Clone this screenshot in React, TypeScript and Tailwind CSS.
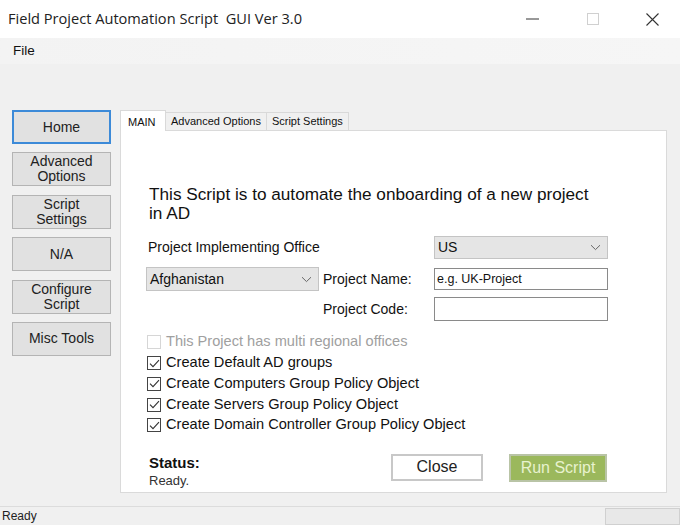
import React from 'react';

const sideButtons = [
  { label: 'Home', active: true },
  { label: 'Advanced\nOptions' },
  { label: 'Script\nSettings' },
  { label: 'N/A' },
  { label: 'Configure\nScript' },
  { label: 'Misc Tools' },
];

const checks = [
  { label: 'This Project has multi regional offices', checked: false, disabled: true },
  { label: 'Create Default AD groups', checked: true },
  { label: 'Create Computers Group Policy Object', checked: true },
  { label: 'Create Servers Group Policy Object', checked: true },
  { label: 'Create Domain Controller Group Policy Object', checked: true },
];

const Chevron = () => (
  <svg width="11" height="7" viewBox="0 0 11 7" className="shrink-0">
    <path d="M1 1.2 L5.5 5.6 L10 1.2" fill="none" stroke="#666" strokeWidth="1" />
  </svg>
);

const Select: React.FC<{ value: string; className?: string }> = ({ value, className }) => (
  <div
    className={`flex items-center justify-between border border-[#c4c4c4] bg-[#e5e5e5] pl-[3px] pr-[6px] text-[14px] text-[#111] ${className ?? ''}`}
  >
    <span>{value}</span>
    <Chevron />
  </div>
);

const CheckRow: React.FC<{ label: string; checked?: boolean; disabled?: boolean }> = ({ label, checked, disabled }) => (
  <div className="flex h-[20.75px] items-center">
    <div
      className={`flex h-[14px] w-[14px] items-center justify-center border bg-white ${disabled ? 'border-[#d6d6d6]' : 'border-[#444]'}`}
    >
      {checked && (
        <svg width="11" height="9" viewBox="0 0 11 9">
          <path d="M1 4.6 L4 7.6 L10 1.2" fill="none" stroke="#333" strokeWidth="1.1" />
        </svg>
      )}
    </div>
    <span className={`ml-[5px] text-[14.6px] ${disabled ? 'text-[#a0a0a0]' : 'text-[#111]'}`}>{label}</span>
  </div>
);

export default function App() {
  return (
    <div
      className="flex h-[525px] w-[680px] flex-col overflow-hidden bg-[#f0f0f0] text-[#111]"
      style={{ fontFamily: '"Liberation Sans", Arial, sans-serif' }}
    >
      {/* Title bar */}
      <div className="flex h-[38px] shrink-0 items-center bg-white">
        <span className="ml-[8px] text-[14.6px] text-[#222]" style={{ fontFamily: '"Open Sans", "Noto Sans", sans-serif' }}>
          Field Project Automation Script&nbsp; GUI Ver 3.0
        </span>
        <div className="ml-auto flex h-full items-center">
          <div className="flex h-full w-[60px] items-center justify-center">
            <svg width="13" height="2" viewBox="0 0 13 2">
              <path d="M0 1 H13" stroke="#333" strokeWidth="1" />
            </svg>
          </div>
          <div className="flex h-full w-[62px] items-center justify-center">
            <svg width="12" height="12" viewBox="0 0 12 12">
              <rect x="0.5" y="0.5" width="11" height="11" fill="none" stroke="#d0d0d0" strokeWidth="1" />
            </svg>
          </div>
          <div className="flex h-full w-[56px] items-center justify-center">
            <svg width="13" height="13" viewBox="0 0 13 13">
              <path d="M0.5 0.5 L12.5 12.5 M12.5 0.5 L0.5 12.5" stroke="#333" strokeWidth="1.1" />
            </svg>
          </div>
        </div>
      </div>

      {/* Menu bar */}
      <div className="flex h-[26px] shrink-0 items-center bg-gradient-to-r from-[#f3f3f3] to-[#f6f6f6] pl-[13px] text-[13.5px]">
        File
      </div>

      {/* Body */}
      <div className="flex flex-1">
        {/* Side buttons */}
        <div className="ml-[12px] mt-[46px] flex w-[99px] flex-col gap-[8.4px]">
          {sideButtons.map(b => (
            <div
              key={b.label}
              className={`flex h-[34px] items-center justify-center whitespace-pre-line text-center text-[14px] leading-[15px] text-[#222] ${
                b.active ? 'border-2 border-[#3c8ad8] bg-[#e1e1e1]' : 'border border-[#b4b4b4] bg-[#e1e1e1]'
              }`}
            >
              {b.label}
            </div>
          ))}
        </div>

        {/* Tabs + panel */}
        <div className="ml-[9px] mt-[46px] flex w-[547px] flex-col">
          <div className="flex h-[20px] items-end text-[11px]">
            <div className="relative z-10 -mb-px flex h-[21px] w-[46px] items-start border border-b-0 border-[#d9d9d9] bg-white pl-[7px] pt-[3px]">
              MAIN
            </div>
            <div className="flex h-[18px] items-center border border-b-0 border-l-0 border-[#d9d9d9] bg-[#f0f0f0] px-[5px]">
              Advanced Options
            </div>
            <div className="flex h-[18px] items-center border border-b-0 border-l-0 border-[#d9d9d9] bg-[#f0f0f0] px-[5px]">
              Script Settings
            </div>
          </div>

          <div className="flex h-[363px] flex-col border border-[#dadada] bg-white pl-[25px] pt-[54px]">
            <div className="ml-[3px] text-[17.2px] leading-[19px] text-[#111]">
              This Script is to automate the onboarding of a new project
              <br />
              in AD
            </div>

            <div className="mt-[13px] flex h-[23px] items-center">
              <span className="ml-[2px] w-[286px] text-[14px]">Project Implementing Office</span>
              <Select value="US" className="h-[23px] w-[174px]" />
            </div>

            <div className="mt-[8px] flex h-[24px] items-center">
              <Select value="Afghanistan" className="h-[24px] w-[173px]" />
              <span className="ml-[4px] w-[111px] text-[14px]">Project Name:</span>
              <div className="flex h-[22px] w-[174px] items-center border border-[#8a8a8a] bg-white pl-[2px] text-[12.5px]">
                e.g. UK-Project
              </div>
            </div>

            <div className="mt-[6px] flex h-[24px] items-center">
              <span className="ml-[177px] w-[111px] text-[14px]">Project Code:</span>
              <div className="h-[24px] w-[174px] border border-[#8a8a8a] bg-white" />
            </div>

            <div className="ml-[1px] mt-[11px] flex flex-col">
              {checks.map(c => (
                <CheckRow key={c.label} {...c} />
              ))}
            </div>

            <div className="mt-[18px] flex items-start">
              <div className="ml-[3px] flex w-[242px] flex-col">
                <span className="text-[15px] font-bold leading-[18px]">Status:</span>
                <span className="mt-[1px] text-[13px] leading-[15px] text-[#333]">Ready.</span>
              </div>
              <div className="flex h-[27px] w-[92px] items-center justify-center border-2 border-[#c8c8c8] bg-white text-[16px] text-[#222]">
                Close
              </div>
              <div className="ml-[26px] flex h-[28px] w-[98px] items-center justify-center border-2 border-[#b9c4a6] bg-[#9bb85c] text-[16px] text-[#e8f2cf]">
                Run Script
              </div>
            </div>
          </div>
        </div>
      </div>

      {/* Status bar */}
      <div className="flex h-[19px] shrink-0 items-center border-t border-[#dcdcdc] bg-[#f0f0f0]">
        <span className="ml-[2px] text-[12px] text-[#222]">Ready</span>
        <div className="ml-auto h-[17px] w-[75px] border border-[#d0d0d0] bg-[#e8e8e8]" />
      </div>
    </div>
  );
}
